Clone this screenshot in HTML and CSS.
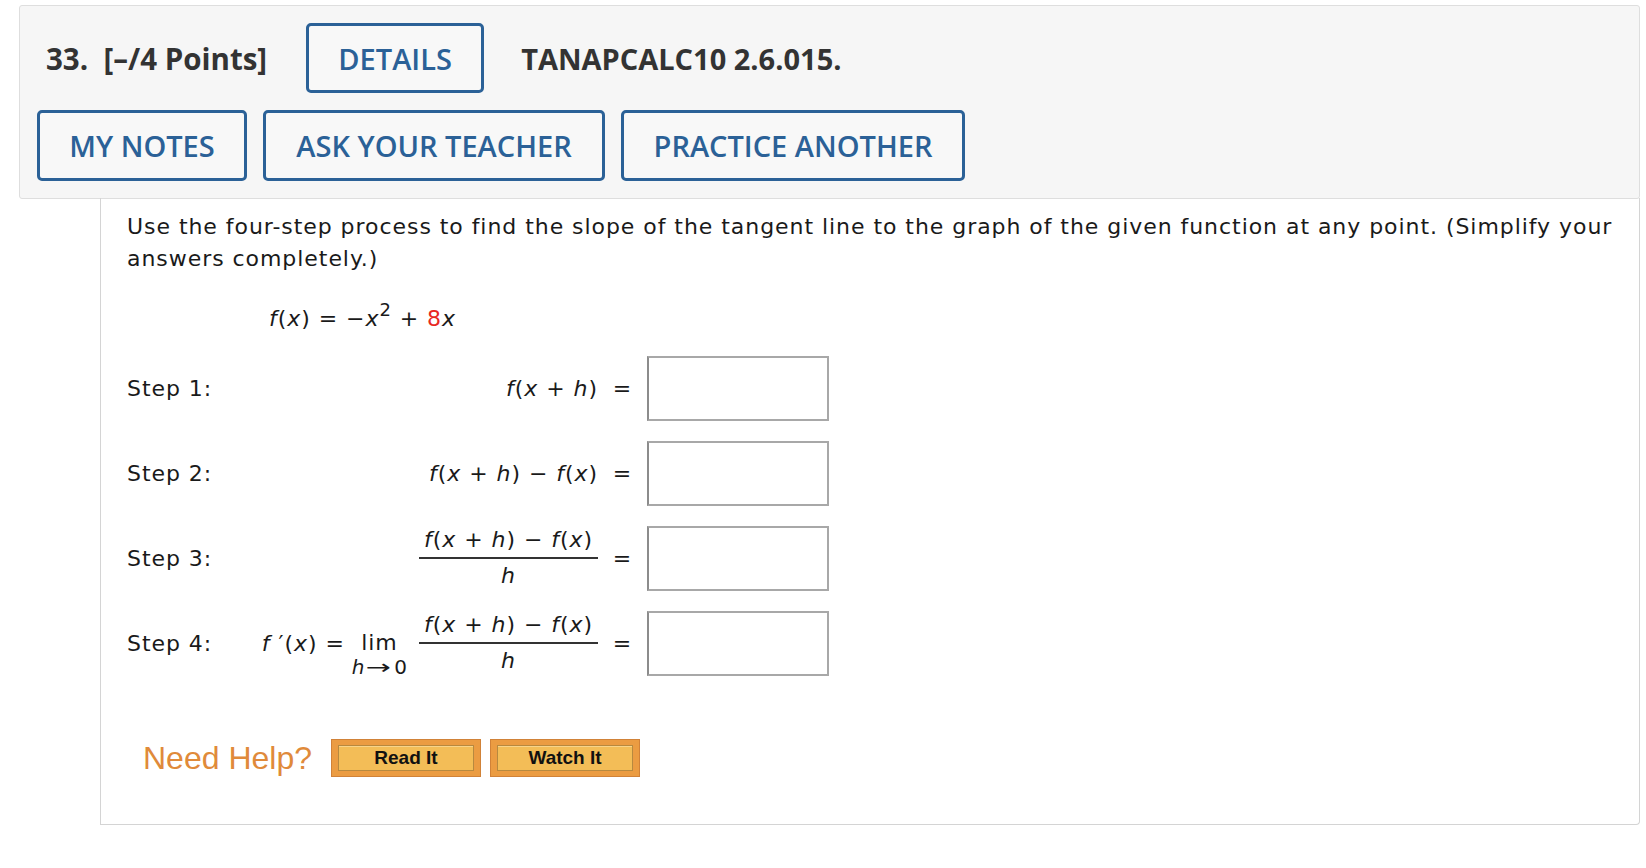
FILE: index.html
```html
<!DOCTYPE html>
<html>
<head>
<meta charset="utf-8">
<link rel="stylesheet" href="styles.css">
</head>
<body>
<div class="page">
  <div class="header">
    <div class="hrow">
      <span class="qnum">33.&nbsp; [–/4 Points]</span>
      <span class="btn btn-details">DETAILS</span>
      <span class="qcode">TANAPCALC10 2.6.015.</span>
    </div>
    <div class="hrow hrow2">
      <span class="btn btn-notes">MY NOTES</span>
      <span class="btn btn-ask">ASK YOUR TEACHER</span>
      <span class="btn btn-practice">PRACTICE ANOTHER</span>
    </div>
  </div>
  <div class="content">
    <p class="intro">Use the four-step process to find the slope of the tangent line to the graph of the given function at any point. (Simplify your answers completely.)</p>
    <div class="fx"><i>f</i>(<i>x</i>) = −<i>x</i><sup>2</sup> + <span class="red">8</span><i>x</i></div>
    <div class="steps">
      <div class="step">
        <span class="label">Step 1:</span>
        <span class="expr"><i>f</i>(<i>x</i> + <i>h</i>)</span>
        <span class="eq">=</span>
        <span class="answer"></span>
      </div>
      <div class="step">
        <span class="label">Step 2:</span>
        <span class="expr"><i>f</i>(<i>x</i> + <i>h</i>) − <i>f</i>(<i>x</i>)</span>
        <span class="eq">=</span>
        <span class="answer"></span>
      </div>
      <div class="step">
        <span class="label">Step 3:</span>
        <span class="expr">
          <span class="frac"><span class="num"><i>f</i>(<i>x</i> + <i>h</i>) − <i>f</i>(<i>x</i>)</span><span class="den"><i>h</i></span></span>
        </span>
        <span class="eq">=</span>
        <span class="answer"></span>
      </div>
      <div class="step">
        <span class="label">Step 4:</span>
        <span class="expr">
          <span class="fp"><i>f</i> ′(<i>x</i>) =</span>
          <span class="lim"><span class="limw">lim</span><span class="limsub"><i>h</i><span class="arrow">→</span>0</span></span>
          <span class="frac"><span class="num"><i>f</i>(<i>x</i> + <i>h</i>) − <i>f</i>(<i>x</i>)</span><span class="den"><i>h</i></span></span>
        </span>
        <span class="eq">=</span>
        <span class="answer"></span>
      </div>
    </div>
    <div class="help">
      <span class="needhelp">Need Help?</span>
      <span class="hbtn"><span class="hbtn-in">Read It</span></span>
      <span class="hbtn"><span class="hbtn-in">Watch It</span></span>
    </div>
  </div>
</div>
</body>
</html>
```

FILE: styles.css
```css
html, body {
  margin: 0;
  padding: 0;
  background: #ffffff;
}
.page {
  padding: 5px 6px 0 19px;
}
.header {
  background: #f6f6f6;
  border: 1px solid #dedede;
  border-radius: 3px;
  padding: 17px 17px 17px 17px;
  font-family: "Open Sans", sans-serif;
  color: #333333;
}
.hrow {
  display: flex;
  align-items: center;
  height: 70px;
}
.hrow2 {
  margin-top: 17px;
  height: 71px;
  gap: 16px;
}
.qnum {
  font-size: 29.5px;
  font-weight: 700;
  margin-left: 9px;
  margin-right: 39px;
  white-space: pre;
}
.qcode {
  font-size: 29px;
  font-weight: 700;
  margin-left: 37px;
}
.btn {
  box-sizing: border-box;
  display: flex;
  align-items: center;
  justify-content: center;
  height: 100%;
  border: 3px solid #2b6197;
  border-radius: 5px;
  color: #2b6197;
  font-size: 29px;
  font-weight: 600;
  background: #f8f8f8;
}
.btn-details { width: 178px; }
.btn-notes { width: 210px; }
.btn-ask { width: 342px; }
.btn-practice { width: 344px; }

.content {
  margin-left: 81px;
  margin-top: -1px;
  border: 1px solid #d4d4d4;
  border-top: none;
  border-radius: 0 0 4px 0;
  padding: 13px 20px 47px 26px;
  font-family: "DejaVu Sans", Verdana, sans-serif;
  font-size: 22px;
  letter-spacing: 0.95px;
  color: #1a1a1a;
}
.intro {
  margin: 0;
  line-height: 32px;
}
.fx {
  margin-top: 28px;
  padding-left: 142px;
  line-height: 32px;
}
.fx sup {
  font-size: 18px;
  line-height: 0;
  vertical-align: 10px;
}
.red { color: #e8281f; }

.steps {
  margin-top: 21px;
  display: flex;
  flex-direction: column;
  gap: 21px;
}
.step {
  display: flex;
  align-items: center;
  height: 64px;
}
.label {
  width: 120px;
}
.expr {
  width: 351px;
  display: flex;
  justify-content: flex-end;
  align-items: center;
  white-space: pre;
}
.eq {
  width: 49px;
  text-align: center;
}
.answer {
  box-sizing: border-box;
  width: 182px;
  height: 65px;
  border: 2px solid #a8a8a8;
  border-left-color: #8c8c8c;
  background: #fff;
}
.frac {
  display: inline-flex;
  flex-direction: column;
  align-items: center;
  line-height: 32px;
}
.frac .num {
  padding: 0 5px 1px 5px;
  white-space: pre;
}
.frac .den {
  align-self: stretch;
  text-align: center;
  border-top: 2px solid #333;
  padding-top: 1px;
}
.fp {
  white-space: pre;
  margin-right: 7px;
}
.lim {
  display: inline-flex;
  flex-direction: column;
  align-items: center;
  margin-right: 12px;
  position: relative;
  top: 12px;
}
.limw { line-height: 24px; }
.limsub {
  font-size: 20px;
  line-height: 24px;
  letter-spacing: 0;
  display: flex;
  align-items: center;
}
.arrow {
  display: inline-block;
  transform: scaleX(1.5);
  margin: 0 7px 0 6px;
}

.help {
  margin-top: 64px;
  display: flex;
  align-items: center;
  height: 38px;
}
.needhelp {
  font-family: "Liberation Sans", Arial, sans-serif;
  font-size: 32px;
  letter-spacing: 0;
  color: #e08a3a;
  margin-left: 16px;
  margin-right: 19px;
}
.hbtn {
  box-sizing: border-box;
  width: 150px;
  height: 38px;
  margin-right: 9px;
  background: #eb9c42;
  border: 1px solid #d18238;
  padding: 5px 6px;
  display: flex;
}
.hbtn-in {
  flex: 1;
  background: #f3bd57;
  border: 1px solid #b7893f;
  box-shadow: inset 0 1px 0 #f8d48a;
  display: flex;
  align-items: center;
  justify-content: center;
  font-family: "Liberation Sans", Arial, sans-serif;
  font-weight: 700;
  font-size: 19px;
  letter-spacing: 0;
  color: #111;
}
```
